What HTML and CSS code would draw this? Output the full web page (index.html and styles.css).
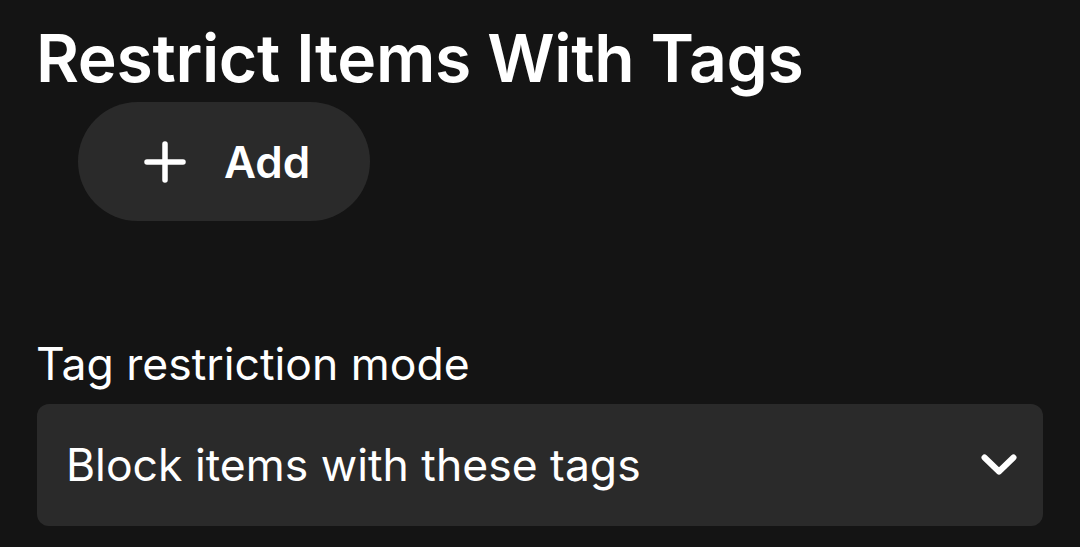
FILE: index.html
```html
<!DOCTYPE html>
<html>
<head>
<meta charset="utf-8">
<link rel="stylesheet" href="styles.css">
</head>
<body>
<main class="panel">
  <h1 class="title">Restrict Items With Tags</h1>
  <div class="add-row">
    <button class="add-btn" type="button">
      <svg class="plus" viewBox="0 0 42 42" width="42" height="42" aria-hidden="true">
        <path d="M21 3v36M3 21h36" stroke="#fff" stroke-width="5.5" stroke-linecap="round" fill="none"/>
      </svg>
      <span class="add-label">Add</span>
    </button>
  </div>
  <div class="field">
    <label class="field-label">Tag restriction mode</label>
    <div class="select">
      <span class="select-value">Block items with these tags</span>
      <svg class="chevron" viewBox="0 0 36 22" width="36" height="22" aria-hidden="true">
        <path d="M3.5 3.5L18 17.5L32.5 3.5" stroke="#fff" stroke-width="6" stroke-linecap="round" stroke-linejoin="round" fill="none"/>
      </svg>
    </div>
  </div>
</main>
</body>
</html>
```

FILE: styles.css
```css
html, body {
  margin: 0;
  padding: 0;
  background: #141414;
  color: #ffffff;
  font-family: Inter, "Noto Sans", sans-serif;
}
.panel {
  width: 1080px;
  height: 547px;
  box-sizing: border-box;
  padding: 18px 37px 0 37px;
  overflow: hidden;
}
.title {
  margin: 0 0 0 -1px;
  font-size: 66px;
  line-height: 80px;
  font-weight: 600;
  letter-spacing: -0.35px;
}
.add-row {
  margin-top: 4px;
  padding-left: 41px;
}
.add-btn {
  display: flex;
  align-items: center;
  gap: 38px;
  height: 119px;
  width: 292px;
  box-sizing: border-box;
  padding: 0 0 0 66px;
  border: none;
  border-radius: 60px;
  background: #2a2a2a;
  color: #ffffff;
  font-family: inherit;
  cursor: pointer;
}
.plus { display: block; flex: none; }
.add-label {
  font-size: 44px;
  font-weight: 600;
  line-height: 1;
}
.field {
  margin-top: 116px;
}
.field-label {
  display: block;
  margin-left: -1px;
  font-size: 44.5px;
  line-height: 55px;
  font-weight: 400;
}
.select {
  margin-top: 12px;
  display: flex;
  align-items: center;
  justify-content: space-between;
  height: 122px;
  width: 1006px;
  box-sizing: border-box;
  padding: 0 26px 0 29px;
  border-radius: 12px;
  background: #2a2a2a;
}
.select-value {
  font-size: 44.5px;
  font-weight: 400;
  line-height: 1;
}
.chevron { display: block; flex: none; }
```
